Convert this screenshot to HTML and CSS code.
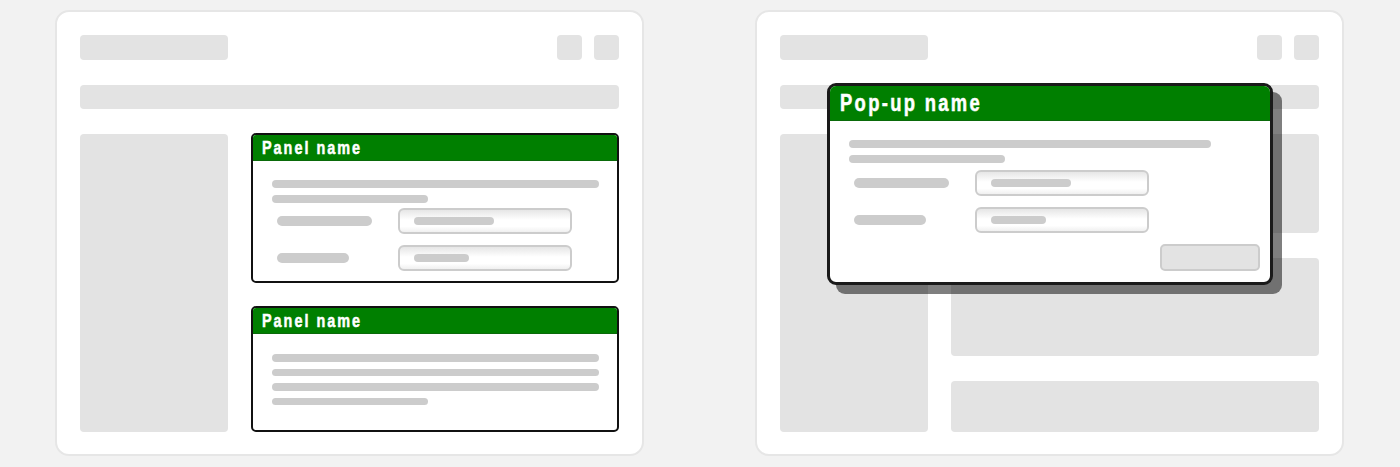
FILE: index.html
```html
<!DOCTYPE html>
<html lang="en">
<head>
<meta charset="utf-8">
<title>Panels vs pop-up</title>
<link rel="stylesheet" href="styles.css">
</head>
<body>
<div class="stage">
  <div class="window">
    <div class="topbar">
      <div class="ph title"></div>
      <div class="icons"><div class="ph sq"></div><div class="ph sq"></div></div>
    </div>
    <div class="ph search"></div>
    <div class="main">
      <div class="ph sidebar"></div>
      <div class="content">
        <section class="panel panel-form">
          <header class="panel-head"><span class="cond">Panel name</span></header>
          <div class="panel-body">
            <div class="lines">
              <div class="line w-full"></div>
              <div class="line w-short"></div>
            </div>
            <div class="form">
              <div class="label l1"></div>
              <div class="input"><div class="val v1"></div></div>
              <div class="label l2"></div>
              <div class="input"><div class="val v2"></div></div>
            </div>
          </div>
        </section>
        <section class="panel panel-text">
          <header class="panel-head"><span class="cond">Panel name</span></header>
          <div class="panel-body">
            <div class="lines lines-text">
              <div class="line w-full"></div>
              <div class="line w-full"></div>
              <div class="line w-full"></div>
              <div class="line w-short"></div>
            </div>
          </div>
        </section>
      </div>
    </div>
  </div>

  <div class="window">
    <div class="topbar">
      <div class="ph title"></div>
      <div class="icons"><div class="ph sq"></div><div class="ph sq"></div></div>
    </div>
    <div class="ph search"></div>
    <div class="main">
      <div class="ph sidebar"></div>
      <div class="content content-blocks">
        <div class="ph block b1"></div>
        <div class="ph block b2"></div>
        <div class="ph block b3"></div>
      </div>
    </div>

    <section class="popup">
      <header class="popup-head"><span class="cond">Pop-up name</span></header>
      <div class="popup-body">
        <div class="lines">
          <div class="line p-full"></div>
          <div class="line w-short"></div>
        </div>
        <div class="form">
          <div class="label l1"></div>
          <div class="input"><div class="val v1"></div></div>
          <div class="label l2"></div>
          <div class="input"><div class="val v2"></div></div>
        </div>
        <div class="button"></div>
      </div>
    </section>
  </div>
</div>
</body>
</html>
```

FILE: styles.css
```css
* { box-sizing: border-box; }

html, body {
  margin: 0;
  padding: 0;
  background: #f2f2f2;
  font-family: "Liberation Sans", Arial, sans-serif;
}

.stage {
  display: flex;
  gap: 111px;
  padding: 10px 0 0 55px;
}

.window {
  position: relative;
  width: 589px;
  height: 446px;
  background: #fff;
  border: 2px solid #e6e6e6;
  border-radius: 14px;
  padding: 23px 23px 22px 23px;
  display: flex;
  flex-direction: column;
}

.ph {
  background: #e3e3e3;
  border-radius: 4px;
}

.topbar {
  display: flex;
  justify-content: space-between;
  height: 25px;
}

.title { width: 148px; height: 25px; }

.icons { display: flex; gap: 12px; }
.sq { width: 25px; height: 25px; }

.search {
  margin-top: 25px;
  height: 24px;
}

.main {
  margin-top: 25px;
  flex: 1;
  display: flex;
  gap: 23px;
}

.sidebar { width: 148px; }

.content {
  flex: 1;
  display: flex;
  flex-direction: column;
  gap: 23px;
}

.content-blocks { gap: 25px; }

/* condensed title lettering */
.cond {
  display: inline-block;
  transform: scaleX(0.8);
  transform-origin: left center;
  -webkit-text-stroke: 0.5px #fff;
  white-space: nowrap;
}

/* ---------- panels ---------- */
.panel {
  border: 2px solid #111;
  border-radius: 5px;
  overflow: hidden;
  background: #fff;
  display: flex;
  flex-direction: column;
}

.panel-form { height: 150px; margin-top: -1px; }
.panel-text { flex: 1; }

.panel-head {
  background: #007f00;
  color: #fff;
  font-weight: bold;
  font-size: 18px;
  letter-spacing: 2.5px;
  height: 26px;
  line-height: 26px;
  padding-left: 9px;
  border-bottom: 1px solid #0a6a0a;
}

.panel-body {
  padding: 19px 18px 0 19px;
}

.lines {
  display: flex;
  flex-direction: column;
  gap: 7.5px;
}

.lines-text { gap: 7px; padding-top: 1px; }

.line {
  height: 7.5px;
  border-radius: 4px;
  background: #cccccc;
}

.w-full { width: 327px; }
.w-short { width: 156px; }
.p-full { width: 362px; }

.form {
  margin-top: 5px;
  display: grid;
  grid-template-columns: 126px 174px;
  row-gap: 11px;
  align-items: center;
}

.label {
  margin-left: 5px;
  height: 10px;
  border-radius: 5px;
  background: #cccccc;
}

.l1 { width: 95px; }
.l2 { width: 72px; }

.input {
  height: 26px;
  border: 2px solid #cccccc;
  border-radius: 6px;
  background: linear-gradient(to bottom, #e6e6e6 0%, #ffffff 45%, #ffffff 75%, #f0f0f0 100%);
  display: flex;
  align-items: center;
  padding-left: 14px;
}

.val {
  height: 8px;
  border-radius: 4px;
  background: #cccccc;
}

.v1 { width: 80px; }
.v2 { width: 55px; }

/* ---------- right window blocks ---------- */
.b1 { height: 99px; }
.b2 { height: 98px; }
.b3 { flex: 1; }

/* ---------- popup ---------- */
.popup {
  position: absolute;
  left: 70px;
  top: 71px;
  width: 446px;
  height: 202px;
  background: #fff;
  border: 3px solid #1a1a1a;
  border-radius: 9px;
  box-shadow: 9px 9px 0 rgba(0, 0, 0, 0.5);
  overflow: hidden;
  display: flex;
  flex-direction: column;
}

.popup-head {
  background: #007f00;
  color: #fff;
  font-weight: bold;
  font-size: 23px;
  letter-spacing: 2.9px;
  height: 35px;
  line-height: 35px;
  padding-left: 10px;
  border-bottom: 1px solid #0a6a0a;
}

.popup-body {
  flex: 1;
  display: flex;
  flex-direction: column;
  padding: 19px 10px 10px 19px;
}

.popup-body .form { margin-top: 7px; }

.button {
  align-self: flex-end;
  margin-top: 11px;
  width: 100px;
  height: 27px;
  border: 2px solid #cccccc;
  border-radius: 5px;
  background: #e3e3e3;
}
```
